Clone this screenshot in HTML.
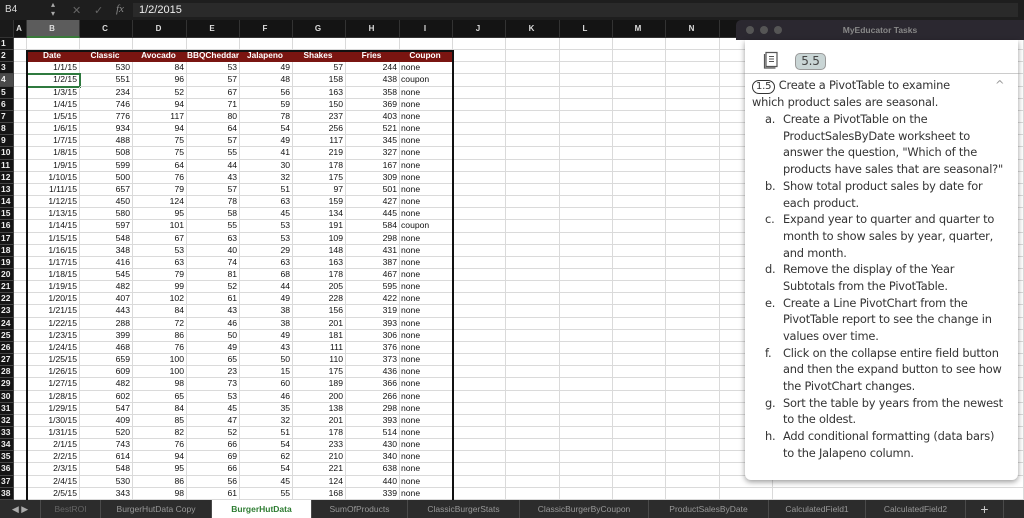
<!DOCTYPE html>
<html><head><meta charset="utf-8"><style>
*{margin:0;padding:0;box-sizing:border-box}
body{width:1024px;height:518px;overflow:hidden;background:#fff;font-family:"Liberation Sans",sans-serif;position:relative}
#fb{position:absolute;left:0;top:0;width:1024px;height:20px;background:#1e1e1e;color:#ddd;font-size:11px}
#grid{position:absolute;left:0;top:20px;display:grid;grid-template-columns:14px 13px 53px 53px 54px 53px 53px 53px 54px 53px 53px 54px 53px 53px 54px 53px 1fr;grid-template-rows:18px repeat(38,12.16px);width:1024px}
#grid span{border-right:1px solid #dadada;border-bottom:1px solid #dadada;font-size:8.6px;line-height:11px;text-align:right;padding-right:2px;white-space:nowrap;overflow:hidden;color:#111}
#grid span.h{background:#141414;color:#ddd;text-align:center;font-size:8px;line-height:18px;border-color:#333;font-weight:bold}
#grid span.r{background:#141414;color:#eee;text-align:left;padding-left:1px;border-color:#444;font-weight:bold;font-size:8.5px}
#grid span.t{background:#7a1511;color:#fff;text-align:center;font-weight:bold;border-color:#7a1511;font-size:8.3px}
#grid span.l{text-align:left;padding-left:1px}
#tabs{position:absolute;left:0;top:500px;width:1024px;height:18px;background:#2c2c2c;font-size:8.5px;color:#999}
#tabs div{position:absolute;top:0;height:18px;line-height:18px;text-align:center;border-right:1px solid #4a4a4a}
#panel{position:absolute;left:736px;top:20px;width:288px;height:462px}
#tb{height:20px;background:#2b2830;color:#888;font-size:8.5px;font-weight:bold;line-height:20px;text-align:center;border-radius:5px 0 0 0}
#tb i{position:absolute;top:6px;width:8px;height:8px;border-radius:50%;background:#555}
#body{position:absolute;left:9px;top:20px;width:273px;height:440px;background:#fff;box-shadow:0 2px 6px rgba(0,0,0,.4);border-radius:0 0 6px 6px;font-family:"DejaVu Sans","Liberation Sans",sans-serif;font-size:11.4px;color:#333;letter-spacing:-0.2px}
.ln{position:absolute;white-space:nowrap}
</style></head><body>
<div id="fb">
<span style="position:absolute;left:5px;top:4px;font-size:10px">B4</span>
<span style="position:absolute;left:51px;top:0px;font-size:8px;color:#aaa;line-height:9px">▴<br>▾</span>
<span style="position:absolute;left:72px;top:4px;color:#666">✕</span>
<span style="position:absolute;left:94px;top:4px;color:#666">✓</span>
<span style="position:absolute;left:116px;top:3px;color:#888;font-style:italic;font-family:'Liberation Serif',serif">fx</span>
<div style="position:absolute;left:133px;top:3px;width:885px;height:14px;background:#2a2a2a;padding-left:6px;line-height:14px;color:#eee">1/2/2015</div>
</div>
<div id="grid">
<span class="h" style="background:#1a1a1a"></span><span class="h">A</span><span class="h" style="background:#5c5c5c;border-bottom:2px solid #3a7a3a">B</span><span class="h">C</span><span class="h">D</span><span class="h">E</span><span class="h">F</span><span class="h">G</span><span class="h">H</span><span class="h">I</span><span class="h">J</span><span class="h">K</span><span class="h">L</span><span class="h">M</span><span class="h">N</span><span class="h">O</span><span class="h"></span>
<span class="r">1</span><span></span><span></span><span></span><span></span><span></span><span></span><span></span><span></span><span></span><span></span><span></span><span></span><span></span><span></span><span></span><span></span>
<span class="r">2</span><span></span><span class="t">Date</span><span class="t">Classic</span><span class="t">Avocado</span><span class="t">BBQCheddar</span><span class="t">Jalapeno</span><span class="t">Shakes</span><span class="t">Fries</span><span class="t">Coupon</span><span></span><span></span><span></span><span></span><span></span><span></span><span></span>
<span class="r">3</span><span></span><span>1/1/15</span><span>530</span><span>84</span><span>53</span><span>49</span><span>57</span><span>244</span><span class="l">none</span><span></span><span></span><span></span><span></span><span></span><span></span><span></span>
<span class="r" style="background:#4a4a4a">4</span><span></span><span style="outline:2px solid #2f7a3f;outline-offset:-1px">1/2/15</span><span>551</span><span>96</span><span>57</span><span>48</span><span>158</span><span>438</span><span class="l">coupon</span><span></span><span></span><span></span><span></span><span></span><span></span><span></span>
<span class="r">5</span><span></span><span>1/3/15</span><span>234</span><span>52</span><span>67</span><span>56</span><span>163</span><span>358</span><span class="l">none</span><span></span><span></span><span></span><span></span><span></span><span></span><span></span>
<span class="r">6</span><span></span><span>1/4/15</span><span>746</span><span>94</span><span>71</span><span>59</span><span>150</span><span>369</span><span class="l">none</span><span></span><span></span><span></span><span></span><span></span><span></span><span></span>
<span class="r">7</span><span></span><span>1/5/15</span><span>776</span><span>117</span><span>80</span><span>78</span><span>237</span><span>403</span><span class="l">none</span><span></span><span></span><span></span><span></span><span></span><span></span><span></span>
<span class="r">8</span><span></span><span>1/6/15</span><span>934</span><span>94</span><span>64</span><span>54</span><span>256</span><span>521</span><span class="l">none</span><span></span><span></span><span></span><span></span><span></span><span></span><span></span>
<span class="r">9</span><span></span><span>1/7/15</span><span>488</span><span>75</span><span>57</span><span>49</span><span>117</span><span>345</span><span class="l">none</span><span></span><span></span><span></span><span></span><span></span><span></span><span></span>
<span class="r">10</span><span></span><span>1/8/15</span><span>508</span><span>75</span><span>55</span><span>41</span><span>219</span><span>327</span><span class="l">none</span><span></span><span></span><span></span><span></span><span></span><span></span><span></span>
<span class="r">11</span><span></span><span>1/9/15</span><span>599</span><span>64</span><span>44</span><span>30</span><span>178</span><span>167</span><span class="l">none</span><span></span><span></span><span></span><span></span><span></span><span></span><span></span>
<span class="r">12</span><span></span><span>1/10/15</span><span>500</span><span>76</span><span>43</span><span>32</span><span>175</span><span>309</span><span class="l">none</span><span></span><span></span><span></span><span></span><span></span><span></span><span></span>
<span class="r">13</span><span></span><span>1/11/15</span><span>657</span><span>79</span><span>57</span><span>51</span><span>97</span><span>501</span><span class="l">none</span><span></span><span></span><span></span><span></span><span></span><span></span><span></span>
<span class="r">14</span><span></span><span>1/12/15</span><span>450</span><span>124</span><span>78</span><span>63</span><span>159</span><span>427</span><span class="l">none</span><span></span><span></span><span></span><span></span><span></span><span></span><span></span>
<span class="r">15</span><span></span><span>1/13/15</span><span>580</span><span>95</span><span>58</span><span>45</span><span>134</span><span>445</span><span class="l">none</span><span></span><span></span><span></span><span></span><span></span><span></span><span></span>
<span class="r">16</span><span></span><span>1/14/15</span><span>597</span><span>101</span><span>55</span><span>53</span><span>191</span><span>584</span><span class="l">coupon</span><span></span><span></span><span></span><span></span><span></span><span></span><span></span>
<span class="r">17</span><span></span><span>1/15/15</span><span>548</span><span>67</span><span>63</span><span>53</span><span>109</span><span>298</span><span class="l">none</span><span></span><span></span><span></span><span></span><span></span><span></span><span></span>
<span class="r">18</span><span></span><span>1/16/15</span><span>348</span><span>53</span><span>40</span><span>29</span><span>148</span><span>431</span><span class="l">none</span><span></span><span></span><span></span><span></span><span></span><span></span><span></span>
<span class="r">19</span><span></span><span>1/17/15</span><span>416</span><span>63</span><span>74</span><span>63</span><span>163</span><span>387</span><span class="l">none</span><span></span><span></span><span></span><span></span><span></span><span></span><span></span>
<span class="r">20</span><span></span><span>1/18/15</span><span>545</span><span>79</span><span>81</span><span>68</span><span>178</span><span>467</span><span class="l">none</span><span></span><span></span><span></span><span></span><span></span><span></span><span></span>
<span class="r">21</span><span></span><span>1/19/15</span><span>482</span><span>99</span><span>52</span><span>44</span><span>205</span><span>595</span><span class="l">none</span><span></span><span></span><span></span><span></span><span></span><span></span><span></span>
<span class="r">22</span><span></span><span>1/20/15</span><span>407</span><span>102</span><span>61</span><span>49</span><span>228</span><span>422</span><span class="l">none</span><span></span><span></span><span></span><span></span><span></span><span></span><span></span>
<span class="r">23</span><span></span><span>1/21/15</span><span>443</span><span>84</span><span>43</span><span>38</span><span>156</span><span>319</span><span class="l">none</span><span></span><span></span><span></span><span></span><span></span><span></span><span></span>
<span class="r">24</span><span></span><span>1/22/15</span><span>288</span><span>72</span><span>46</span><span>38</span><span>201</span><span>393</span><span class="l">none</span><span></span><span></span><span></span><span></span><span></span><span></span><span></span>
<span class="r">25</span><span></span><span>1/23/15</span><span>399</span><span>86</span><span>50</span><span>49</span><span>181</span><span>306</span><span class="l">none</span><span></span><span></span><span></span><span></span><span></span><span></span><span></span>
<span class="r">26</span><span></span><span>1/24/15</span><span>468</span><span>76</span><span>49</span><span>43</span><span>111</span><span>376</span><span class="l">none</span><span></span><span></span><span></span><span></span><span></span><span></span><span></span>
<span class="r">27</span><span></span><span>1/25/15</span><span>659</span><span>100</span><span>65</span><span>50</span><span>110</span><span>373</span><span class="l">none</span><span></span><span></span><span></span><span></span><span></span><span></span><span></span>
<span class="r">28</span><span></span><span>1/26/15</span><span>609</span><span>100</span><span>23</span><span>15</span><span>175</span><span>436</span><span class="l">none</span><span></span><span></span><span></span><span></span><span></span><span></span><span></span>
<span class="r">29</span><span></span><span>1/27/15</span><span>482</span><span>98</span><span>73</span><span>60</span><span>189</span><span>366</span><span class="l">none</span><span></span><span></span><span></span><span></span><span></span><span></span><span></span>
<span class="r">30</span><span></span><span>1/28/15</span><span>602</span><span>65</span><span>53</span><span>46</span><span>200</span><span>266</span><span class="l">none</span><span></span><span></span><span></span><span></span><span></span><span></span><span></span>
<span class="r">31</span><span></span><span>1/29/15</span><span>547</span><span>84</span><span>45</span><span>35</span><span>138</span><span>298</span><span class="l">none</span><span></span><span></span><span></span><span></span><span></span><span></span><span></span>
<span class="r">32</span><span></span><span>1/30/15</span><span>409</span><span>85</span><span>47</span><span>32</span><span>201</span><span>393</span><span class="l">none</span><span></span><span></span><span></span><span></span><span></span><span></span><span></span>
<span class="r">33</span><span></span><span>1/31/15</span><span>520</span><span>82</span><span>52</span><span>51</span><span>178</span><span>514</span><span class="l">none</span><span></span><span></span><span></span><span></span><span></span><span></span><span></span>
<span class="r">34</span><span></span><span>2/1/15</span><span>743</span><span>76</span><span>66</span><span>54</span><span>233</span><span>430</span><span class="l">none</span><span></span><span></span><span></span><span></span><span></span><span></span><span></span>
<span class="r">35</span><span></span><span>2/2/15</span><span>614</span><span>94</span><span>69</span><span>62</span><span>210</span><span>340</span><span class="l">none</span><span></span><span></span><span></span><span></span><span></span><span></span><span></span>
<span class="r">36</span><span></span><span>2/3/15</span><span>548</span><span>95</span><span>66</span><span>54</span><span>221</span><span>638</span><span class="l">none</span><span></span><span></span><span></span><span></span><span></span><span></span><span></span>
<span class="r">37</span><span></span><span>2/4/15</span><span>530</span><span>86</span><span>56</span><span>45</span><span>124</span><span>440</span><span class="l">none</span><span></span><span></span><span></span><span></span><span></span><span></span><span></span>
<span class="r">38</span><span></span><span>2/5/15</span><span>343</span><span>98</span><span>61</span><span>55</span><span>168</span><span>339</span><span class="l">none</span><span></span><span></span><span></span><span></span><span></span><span></span><span></span>
</div>
<div style="position:absolute;left:26px;top:50px;width:428px;height:452px;border:2px solid #111;border-bottom:none"></div>
<div id="tabs">
<div style="left:0;width:41px;color:#aaa;font-size:9px">◀ ▶</div>
<div style="left:41px;width:60px;color:#666">BestROI</div>
<div style="left:101px;width:111px">BurgerHutData Copy</div>
<div style="left:212px;width:100px;background:#fff;color:#2e7d32;font-weight:bold">BurgerHutData</div>
<div style="left:312px;width:96px">SumOfProducts</div>
<div style="left:408px;width:112px">ClassicBurgerStats</div>
<div style="left:520px;width:129px">ClassicBurgerByCoupon</div>
<div style="left:649px;width:120px">ProductSalesByDate</div>
<div style="left:769px;width:97px">CalculatedField1</div>
<div style="left:866px;width:100px">CalculatedField2</div>
<div style="left:966px;width:38px;font-size:14px;color:#ccc">+</div>
</div>
<div id="panel">
<div id="tb"><i style="left:10px"></i><i style="left:24px"></i><i style="left:38px"></i>MyEducator Tasks</div>
<div id="body">
<svg style="position:absolute;left:18px;top:11px" width="16" height="18" viewBox="0 0 16 18"><path d="M3 1.5h11v14H3zM1.5 3v14h11" fill="none" stroke="#555" stroke-width="1.2"/><path d="M6 5.5h5M6 8h5M6 10.5h5" stroke="#555" stroke-width="1"/></svg>
<div style="position:absolute;left:50px;top:13px;width:31px;height:17px;background:#c9d5d5;border:1px solid #999;border-radius:5px;text-align:center;line-height:15px;font-size:12px;color:#444">5.5</div>
<div style="position:absolute;left:0;top:33px;width:273px;height:1px;background:#ccc"></div>
<div class="ln" style="left:7px;top:38px"><span style="display:inline-block;border:1px solid #333;border-radius:8px;padding:0 3px;font-size:10px;line-height:12px">1.5</span> Create a PivotTable to examine</div>
<div class="ln" style="left:250px;top:38px;color:#999">^</div>
<div class="ln" style="left:7px;top:55px">which product sales are seasonal.</div>
<div class="ln" style="left:20px;top:72px">a.</div><div class="ln" style="left:38px;top:72px">Create a PivotTable on the</div>
<div class="ln" style="left:38px;top:89px">ProductSalesByDate worksheet to</div>
<div class="ln" style="left:38px;top:105px">answer the question, "Which of the</div>
<div class="ln" style="left:38px;top:122px">products have sales that are seasonal?"</div>
<div class="ln" style="left:20px;top:139px">b.</div><div class="ln" style="left:38px;top:139px">Show total product sales by date for</div>
<div class="ln" style="left:38px;top:156px">each product.</div>
<div class="ln" style="left:20px;top:172px">c.</div><div class="ln" style="left:38px;top:172px">Expand year to quarter and quarter to</div>
<div class="ln" style="left:38px;top:189px">month to show sales by year, quarter,</div>
<div class="ln" style="left:38px;top:206px">and month.</div>
<div class="ln" style="left:20px;top:222px">d.</div><div class="ln" style="left:38px;top:222px">Remove the display of the Year</div>
<div class="ln" style="left:38px;top:239px">Subtotals from the PivotTable.</div>
<div class="ln" style="left:20px;top:256px">e.</div><div class="ln" style="left:38px;top:256px">Create a Line PivotChart from the</div>
<div class="ln" style="left:38px;top:272px">PivotTable report to see the change in</div>
<div class="ln" style="left:38px;top:289px">values over time.</div>
<div class="ln" style="left:20px;top:306px">f.</div><div class="ln" style="left:38px;top:306px">Click on the collapse entire field button</div>
<div class="ln" style="left:38px;top:322px">and then the expand button to see how</div>
<div class="ln" style="left:38px;top:339px">the PivotChart changes.</div>
<div class="ln" style="left:20px;top:356px">g.</div><div class="ln" style="left:38px;top:356px">Sort the table by years from the newest</div>
<div class="ln" style="left:38px;top:372px">to the oldest.</div>
<div class="ln" style="left:20px;top:389px">h.</div><div class="ln" style="left:38px;top:389px">Add conditional formatting (data bars)</div>
<div class="ln" style="left:38px;top:406px">to the Jalapeno column.</div>
</div>
</div>
</body></html>
